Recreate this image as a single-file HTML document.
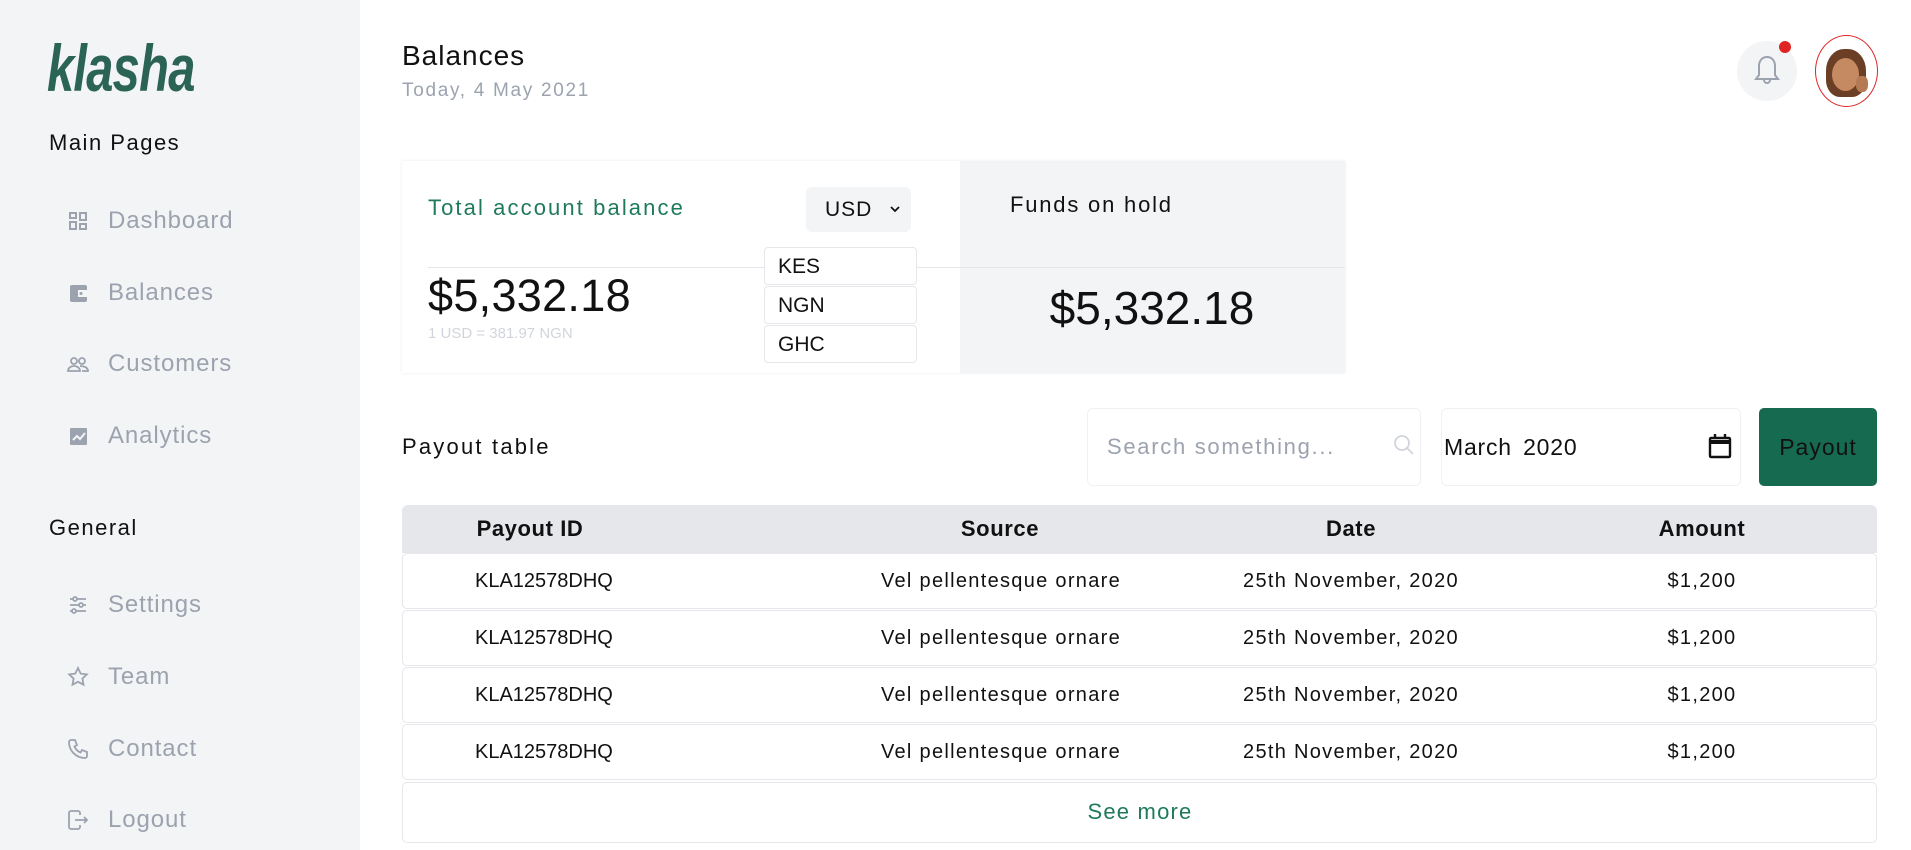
<!DOCTYPE html>
<html><head><meta charset="utf-8"><style>
*{margin:0;padding:0;box-sizing:border-box}
body{width:1911px;height:850px;position:relative;overflow:hidden;background:#fff;font-family:"Liberation Sans",sans-serif;color:#111}
.a{position:absolute;white-space:nowrap}
.side{position:absolute;left:0;top:0;width:360px;height:850px;background:#f3f4f6}
.logo{left:47px;top:30px;font-size:66px;font-weight:bold;font-style:italic;color:#2b6454;transform:scaleX(0.74);transform-origin:left;letter-spacing:-1px}
.sec{left:49px;font-size:22px;color:#111;letter-spacing:1.5px}
.mi{left:108px;font-size:24px;color:#9ca3af;line-height:30px;letter-spacing:0.9px}
.ic{position:absolute;left:66px;width:24px;height:24px}
.c{text-align:center;width:400px;margin-left:-200px}
.row{position:absolute;left:402px;width:1475px;border:1px solid #e5e7eb;border-radius:5px;background:#fff}
.rt{font-size:20px;line-height:24px;letter-spacing:1.3px}
.h{font-size:22px;font-weight:bold;letter-spacing:0.6px}
</style></head><body>
<div class="side"></div>
<div class="a logo">klasha</div>
<div class="a sec" style="top:130px">Main Pages</div>
<svg class="ic" style="top:209px" viewBox="0 0 24 24" fill="none" stroke="#9ca3af" stroke-width="2"><rect x="4" y="4" width="6" height="5"/><rect x="4" y="13" width="6" height="7"/><rect x="14" y="4" width="6" height="7"/><rect x="14" y="15" width="6" height="5"/></svg>
<div class="a mi" style="top:206px">Dashboard</div>
<svg class="ic" style="top:281px" viewBox="0 0 24 24"><rect x="4" y="4" width="17" height="17" rx="2" fill="#9ca3af"/><rect x="12" y="9" width="9" height="7" fill="#f3f4f6"/><circle cx="15" cy="12.5" r="1.5" fill="#9ca3af"/></svg>
<div class="a mi" style="top:278px">Balances</div>
<svg class="ic" style="top:352px" viewBox="0 0 24 24" fill="none" stroke="#9ca3af" stroke-width="1.8"><circle cx="8" cy="9" r="3"/><circle cx="16" cy="9" r="3"/><path d="M2 19c0-3 3-5 6-5s6 2 6 5zM14 14c3 0 8 1 8 5h-6"/></svg>
<div class="a mi" style="top:349px">Customers</div>
<svg class="ic" style="top:424px" viewBox="0 0 24 24"><rect x="4" y="4" width="17" height="17" rx="1" fill="#9ca3af"/><path d="M7 16l4-4 3 3 5-6" stroke="#f3f4f6" stroke-width="2" fill="none"/></svg>
<div class="a mi" style="top:421px">Analytics</div>
<div class="a sec" style="top:515px">General</div>
<svg class="ic" style="top:593px" viewBox="0 0 24 24" fill="none" stroke="#9ca3af" stroke-width="1.8"><path d="M4 6h16M4 12h16M4 18h16"/><circle cx="9" cy="6" r="2" fill="#f3f4f6"/><circle cx="15" cy="12" r="2" fill="#f3f4f6"/><circle cx="8" cy="18" r="2" fill="#f3f4f6"/></svg>
<div class="a mi" style="top:590px">Settings</div>
<svg class="ic" style="top:665px" viewBox="0 0 24 24" fill="none" stroke="#9ca3af" stroke-width="1.8"><path d="M12 3l2.7 5.6 6.1.8-4.4 4.2 1.1 6.1L12 16.8l-5.5 2.9 1.1-6.1L3.2 9.4l6.1-.8z"/></svg>
<div class="a mi" style="top:662px">Team</div>
<svg class="ic" style="top:737px" viewBox="0 0 24 24" fill="none" stroke="#9ca3af" stroke-width="1.8"><path d="M5 3h4l2 5-2.5 1.5a11 11 0 006 6L16 13l5 2v4a2 2 0 01-2 2A16 16 0 013 5a2 2 0 012-2z"/></svg>
<div class="a mi" style="top:734px">Contact</div>
<svg class="ic" style="top:808px" viewBox="0 0 24 24" fill="none" stroke="#9ca3af" stroke-width="1.8"><path d="M14 7V5a2 2 0 00-2-2H5a2 2 0 00-2 2v14a2 2 0 002 2h7a2 2 0 002-2v-2M9 12h12M18 9l3 3-3 3"/></svg>
<div class="a mi" style="top:805px">Logout</div>

<div class="a" style="left:402px;top:40px;font-size:28px;letter-spacing:1px">Balances</div>
<div class="a" style="left:402px;top:80px;font-size:19px;color:#9ca3af;letter-spacing:1.7px">Today, 4 May 2021</div>
<div class="a" style="left:1737px;top:41px;width:60px;height:60px;border-radius:50%;background:#f3f4f6"></div>
<svg class="a" style="left:1753px;top:55px" width="28" height="32" viewBox="0 0 28 32" fill="none" stroke="#9ca3af" stroke-width="2"><path d="M14 2c-5 0-8 4-8 9v9l-3 4h22l-3-4v-9c0-5-3-9-8-9zM11 25a3 3 0 006 0"/></svg>
<div class="a" style="left:1779px;top:41px;width:12px;height:12px;border-radius:50%;background:#e02424"></div>
<div class="a" style="left:1815px;top:35px;width:63px;height:72px;border-radius:50%;border:1px solid #e02424;overflow:hidden;background:#fff">
<div style="position:absolute;left:10px;top:13px;width:40px;height:48px;border-radius:45% 45% 35% 35%;background:#6b3f26"></div>
<div style="position:absolute;left:16px;top:22px;width:27px;height:33px;border-radius:50%;background:#c58a62"></div>
<div style="position:absolute;left:40px;top:40px;width:12px;height:16px;border-radius:40%;background:#b57a54"></div>
</div>

<div class="a" style="left:402px;top:161px;width:943px;height:212px;box-shadow:0 0 3px rgba(0,0,0,.08);background:#fff"></div>
<div class="a" style="left:960px;top:161px;width:385px;height:212px;background:#f3f4f6"></div>
<div class="a" style="left:428px;top:267px;width:917px;height:1px;background:#e5e7eb"></div>
<div class="a" style="left:428px;top:195px;font-size:22px;color:#1f7a5c;letter-spacing:2.1px">Total account balance</div>
<div class="a" style="left:806px;top:187px;width:105px;height:45px;background:#f3f4f6;border-radius:6px"></div>
<div class="a" style="left:825px;top:198px;font-size:21px;letter-spacing:1px">USD</div>
<svg class="a" style="left:889px;top:203px" width="12" height="12" viewBox="0 0 12 12" fill="none" stroke="#111" stroke-width="1.8"><path d="M2 4l4 4 4-4"/></svg>
<div class="a" style="left:428px;top:270px;font-size:45px;letter-spacing:0.3px">$5,332.18</div>
<div class="a" style="left:428px;top:325px;font-size:15px;color:#d1d5db">1 USD = 381.97 NGN</div>
<div class="a" style="left:764px;top:247px;width:153px;height:38px;background:#fff;border:1px solid #e5e7eb;border-radius:4px;padding:7px 13px;font-size:21px">KES</div>
<div class="a" style="left:764px;top:286px;width:153px;height:38px;background:#fff;border:1px solid #e5e7eb;border-radius:4px;padding:7px 13px;font-size:21px">NGN</div>
<div class="a" style="left:764px;top:325px;width:153px;height:38px;background:#fff;border:1px solid #e5e7eb;border-radius:4px;padding:7px 13px;font-size:21px">GHC</div>
<div class="a" style="left:1010px;top:192px;font-size:22px;letter-spacing:1.8px">Funds on hold</div>
<div class="a c" style="left:1152px;top:281px;font-size:46px">$5,332.18</div>

<div class="a" style="left:402px;top:434px;font-size:22px;letter-spacing:2.2px">Payout table</div>
<div class="a" style="left:1087px;top:408px;width:334px;height:78px;border:1px solid #f0f1f3;border-radius:6px"></div>
<div class="a" style="left:1107px;top:434px;font-size:22px;color:#9ca3af;letter-spacing:1.7px">Search something...</div>
<svg class="a" style="left:1393px;top:434px" width="22" height="22" viewBox="0 0 22 22" fill="none" stroke="#d1d5db" stroke-width="1.8"><circle cx="9" cy="9" r="7"/><path d="M14 14l6 6"/></svg>
<div class="a" style="left:1441px;top:408px;width:300px;height:78px;border:1px solid #f0f1f3;border-radius:6px"></div>
<div class="a" style="left:1444px;top:434px;font-size:23px;word-spacing:4px;letter-spacing:0.8px">March 2020</div>
<svg class="a" style="left:1708px;top:433px" width="24" height="26" viewBox="0 0 24 26" fill="none" stroke="#111" stroke-width="2.4"><rect x="2" y="5" width="20" height="19" rx="1"/><path d="M2 9h20" stroke-width="4"/><path d="M7 1v4M17 1v4"/></svg>
<div class="a" style="left:1759px;top:408px;width:118px;height:78px;background:#166a50;border-radius:5px;font-size:23px;color:#111;text-align:center;line-height:78px;letter-spacing:1px">Payout</div>

<div class="a" style="left:402px;top:505px;width:1475px;height:48px;background:#e5e7eb;border-radius:6px 6px 0 0"></div>
<div class="a c h" style="left:530px;top:516px">Payout ID</div>
<div class="a c h" style="left:1000px;top:516px">Source</div>
<div class="a c h" style="left:1351px;top:516px">Date</div>
<div class="a c h" style="left:1702px;top:516px">Amount</div>

<div class="row" style="top:553px;height:56px"></div>
<div class="row" style="top:610px;height:56px"></div>
<div class="row" style="top:667px;height:56px"></div>
<div class="row" style="top:724px;height:56px"></div>
<div class="row" style="top:782px;height:61px"></div>

<div class="a rt" style="left:475px;top:569px;letter-spacing:0">KLA12578DHQ</div>
<div class="a c rt" style="left:1001px;top:569px">Vel pellentesque ornare</div>
<div class="a c rt" style="left:1351px;top:569px">25th November, 2020</div>
<div class="a c rt" style="left:1702px;top:569px">$1,200</div>
<div class="a rt" style="left:475px;top:626px;letter-spacing:0">KLA12578DHQ</div>
<div class="a c rt" style="left:1001px;top:626px">Vel pellentesque ornare</div>
<div class="a c rt" style="left:1351px;top:626px">25th November, 2020</div>
<div class="a c rt" style="left:1702px;top:626px">$1,200</div>
<div class="a rt" style="left:475px;top:683px;letter-spacing:0">KLA12578DHQ</div>
<div class="a c rt" style="left:1001px;top:683px">Vel pellentesque ornare</div>
<div class="a c rt" style="left:1351px;top:683px">25th November, 2020</div>
<div class="a c rt" style="left:1702px;top:683px">$1,200</div>
<div class="a rt" style="left:475px;top:740px;letter-spacing:0">KLA12578DHQ</div>
<div class="a c rt" style="left:1001px;top:740px">Vel pellentesque ornare</div>
<div class="a c rt" style="left:1351px;top:740px">25th November, 2020</div>
<div class="a c rt" style="left:1702px;top:740px">$1,200</div>
<div class="a c" style="left:1140px;top:799px;font-size:22px;color:#1f7a5c;letter-spacing:1.2px">See more</div>
</body></html>
